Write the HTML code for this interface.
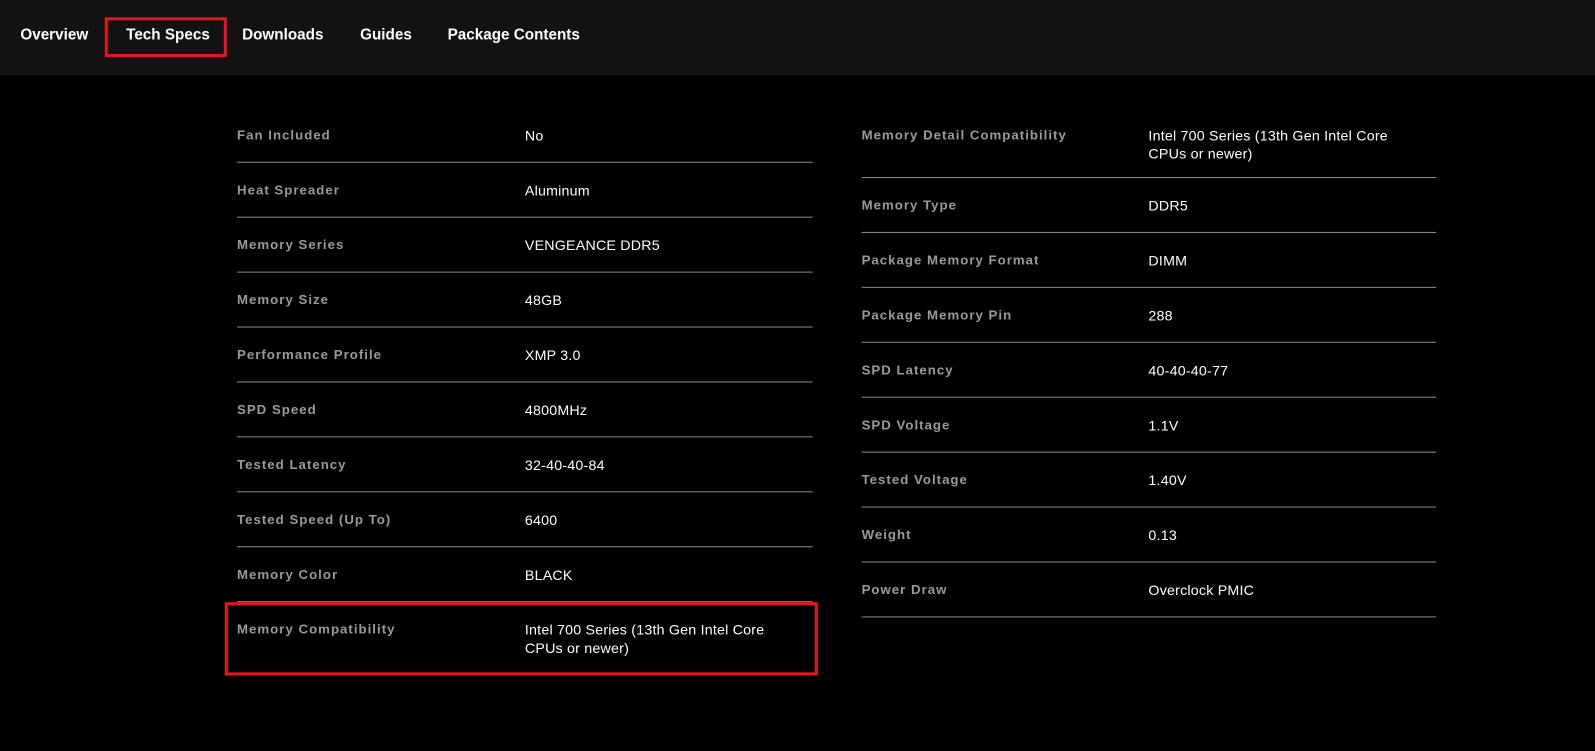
<!DOCTYPE html>
<html><head><style>
*{margin:0;padding:0;box-sizing:border-box}
body{width:1595px;height:750px;background:#000;font-family:"Liberation Sans",sans-serif;position:relative;overflow:hidden}
#w{position:absolute;left:0;top:0;width:1568px;height:738px;transform:scale(1.0172);transform-origin:0 0}
.nav{position:absolute;left:0;top:0;width:1568px;height:74px;background:#121212}
.nav span{position:absolute;top:26px;color:#fff;font-weight:bold;font-size:15px;line-height:18px}
.box{position:absolute;border:3px solid #e8141e}
.row{position:absolute;border-bottom:1px solid #8a8a8a}
.l{position:absolute;left:0;top:3px;color:#9a9a9a;font-weight:bold;font-size:13px;letter-spacing:1px;line-height:18px}
.v{position:absolute;top:3px;color:#fff;font-size:14px;line-height:18px;letter-spacing:0.2px}
</style></head><body><div id="w">
<div class="nav">
<span style="left:20px">Overview</span>
<span style="left:124px">Tech Specs</span>
<span style="left:238px">Downloads</span>
<span style="left:354px">Guides</span>
<span style="left:440px">Package Contents</span>
</div>
<div class="box" style="left:103px;top:17px;width:120px;height:39px"></div>

<div class="row" style="left:233px;top:121px;width:566px;height:39px"><div class="l">Fan Included</div><div class="v" style="left:283px">No</div></div>
<div class="row" style="left:233px;top:175px;width:566px;height:39px"><div class="l">Heat Spreader</div><div class="v" style="left:283px">Aluminum</div></div>
<div class="row" style="left:233px;top:229px;width:566px;height:39px"><div class="l">Memory Series</div><div class="v" style="left:283px">VENGEANCE DDR5</div></div>
<div class="row" style="left:233px;top:283px;width:566px;height:39px"><div class="l">Memory Size</div><div class="v" style="left:283px">48GB</div></div>
<div class="row" style="left:233px;top:337px;width:566px;height:39px"><div class="l">Performance Profile</div><div class="v" style="left:283px">XMP 3.0</div></div>
<div class="row" style="left:233px;top:391px;width:566px;height:39px"><div class="l">SPD Speed</div><div class="v" style="left:283px">4800MHz</div></div>
<div class="row" style="left:233px;top:445px;width:566px;height:39px"><div class="l">Tested Latency</div><div class="v" style="left:283px">32-40-40-84</div></div>
<div class="row" style="left:233px;top:499px;width:566px;height:39px"><div class="l">Tested Speed (Up To)</div><div class="v" style="left:283px">6400</div></div>
<div class="row" style="left:233px;top:553px;width:566px;height:39px"><div class="l">Memory Color</div><div class="v" style="left:283px">BLACK</div></div>
<div class="row" style="left:233px;top:607px;width:566px;height:39px;border:none"><div class="l">Memory Compatibility</div><div class="v" style="left:283px">Intel 700 Series (13th Gen Intel Core<br>CPUs or newer)</div></div>
<div class="box" style="left:221px;top:592px;width:583px;height:72px"></div>

<div class="row" style="left:847px;top:121px;width:565px;height:54px"><div class="l">Memory Detail Compatibility</div><div class="v" style="left:282px">Intel 700 Series (13th Gen Intel Core<br>CPUs or newer)</div></div>
<div class="row" style="left:847px;top:190px;width:565px;height:39px"><div class="l">Memory Type</div><div class="v" style="left:282px">DDR5</div></div>
<div class="row" style="left:847px;top:244px;width:565px;height:39px"><div class="l">Package Memory Format</div><div class="v" style="left:282px">DIMM</div></div>
<div class="row" style="left:847px;top:298px;width:565px;height:39px"><div class="l">Package Memory Pin</div><div class="v" style="left:282px">288</div></div>
<div class="row" style="left:847px;top:352px;width:565px;height:39px"><div class="l">SPD Latency</div><div class="v" style="left:282px">40-40-40-77</div></div>
<div class="row" style="left:847px;top:406px;width:565px;height:39px"><div class="l">SPD Voltage</div><div class="v" style="left:282px">1.1V</div></div>
<div class="row" style="left:847px;top:460px;width:565px;height:39px"><div class="l">Tested Voltage</div><div class="v" style="left:282px">1.40V</div></div>
<div class="row" style="left:847px;top:514px;width:565px;height:39px"><div class="l">Weight</div><div class="v" style="left:282px">0.13</div></div>
<div class="row" style="left:847px;top:568px;width:565px;height:39px"><div class="l">Power Draw</div><div class="v" style="left:282px">Overclock PMIC</div></div>
</div></body></html>
